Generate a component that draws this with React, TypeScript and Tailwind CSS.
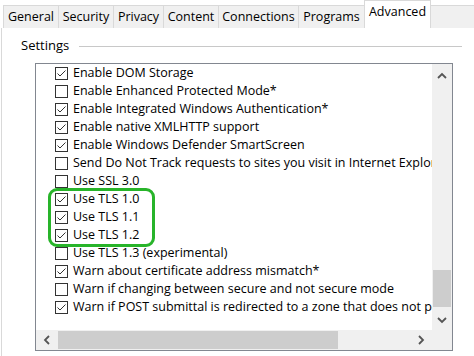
import React from 'react';

const tabs = [
  { label: 'General', w: 'w-[55px]' },
  { label: 'Security', w: 'w-[55px]' },
  { label: 'Privacy', w: 'w-[50px]' },
  { label: 'Content', w: 'w-[55px]' },
  { label: 'Connections', w: 'w-[80px]' },
  { label: 'Programs', w: 'w-[66px]' },
];

const rows: { label: string; checked: boolean }[] = [
  { label: 'Enable DOM Storage', checked: true },
  { label: 'Enable Enhanced Protected Mode*', checked: false },
  { label: 'Enable Integrated Windows Authentication*', checked: true },
  { label: 'Enable native XMLHTTP support', checked: true },
  { label: 'Enable Windows Defender SmartScreen', checked: true },
  { label: 'Send Do Not Track requests to sites you visit in Internet Explorer', checked: false },
  { label: 'Use SSL 3.0', checked: false },
  { label: 'Use TLS 1.0', checked: true },
  { label: 'Use TLS 1.1', checked: true },
  { label: 'Use TLS 1.2', checked: true },
  { label: 'Use TLS 1.3 (experimental)', checked: false },
  { label: 'Warn about certificate address mismatch*', checked: true },
  { label: 'Warn if changing between secure and not secure mode', checked: false },
  { label: 'Warn if POST submittal is redirected to a zone that does not permit posts', checked: true },
];

function CheckBox({ checked }: { checked: boolean }) {
  return (
    <svg width="13" height="13" viewBox="0 0 13 13" className="shrink-0">
      <rect x="0.5" y="0.5" width="12" height="12" fill="#fff" stroke="#333" />
      {checked && <polyline points="2.5,6.5 5,9 10.5,3.5" fill="none" stroke="#333" strokeWidth="1" />}
    </svg>
  );
}

function Chevron({ dir }: { dir: 'up' | 'down' | 'left' | 'right' }) {
  const pts = {
    up: '1,6 5,2 9,6',
    down: '1,2 5,6 9,2',
    left: '6,1 2,5 6,9',
    right: '2,1 6,5 2,9',
  }[dir];
  const horiz = dir === 'left' || dir === 'right';
  return (
    <svg width={horiz ? 8 : 10} height={horiz ? 10 : 8} viewBox={horiz ? '0 0 8 10' : '0 0 10 8'}>
      <polyline points={pts} fill="none" stroke="#555" strokeWidth="1.8" />
    </svg>
  );
}

export default function App() {
  return (
    <div className="relative w-[474px] h-[356px] overflow-hidden bg-white text-black font-['Open_Sans',sans-serif] text-[12.5px]">
      {/* Tab strip */}
      <div className="flex items-end h-[28px] pl-[3px]">
        {tabs.map((t) => (
          <div
            key={t.label}
            className={`${t.w} h-[23px] flex items-center justify-center bg-[#f0f0f0] border-t border-l border-[#d9d9d9] text-[12.5px] leading-none`}
          >
            {t.label}
          </div>
        ))}
        <div className="w-[67px] h-[28px] flex items-center justify-center bg-white border-t border-l border-r border-[#d9d9d9] text-[12.5px] leading-none pb-[4px]">
          Advanced
        </div>
        <div className="flex-1 h-[23px] bg-[#f0f0f0] border-t border-[#d9d9d9]" />
      </div>

      {/* Page */}
      <div className="h-[328px] border-l border-[#d9d9d9] ml-[1px] flex flex-col">
        <div className="flex items-center h-[35px] pl-[19px] pr-[12px] pt-[1px]">
          <span className="text-[13px]">Settings</span>
          <div className="flex-1 h-px bg-[#c8c8c8] ml-[10px]" />
        </div>

        <div className="ml-[33px] w-[418px] h-[288px] border border-[#828790] flex flex-col">
          <div className="flex h-[266px]">
            <div className="flex-1 overflow-hidden">
              {rows.map((r) => (
                <div key={r.label} className="h-[18px] flex items-center pl-[19px] gap-[5px] whitespace-nowrap">
                  <CheckBox checked={r.checked} />
                  <span className="leading-none">{r.label}</span>
                </div>
              ))}
            </div>
            {/* vertical scrollbar */}
            <div className="w-[20px] bg-[#f0f0f0] flex flex-col items-center">
              <div className="h-[22px] flex items-center justify-center pt-[2px]">
                <Chevron dir="up" />
              </div>
              <div className="flex-1 w-full flex flex-col justify-end px-[1px] pb-[3px]">
                <div className="h-[37px] bg-[#cdcdcd]" />
              </div>
              <div className="h-[20px] flex items-center justify-center">
                <Chevron dir="down" />
              </div>
            </div>
          </div>
          {/* horizontal scrollbar */}
          <div className="flex h-[20px]">
            <div className="flex-1 bg-[#f0f0f0] flex items-center">
              <div className="w-[22px] flex items-center justify-center">
                <Chevron dir="left" />
              </div>
              <div className="h-[18px] w-[280px] bg-[#cdcdcd]" />
              <div className="flex-1" />
              <div className="w-[22px] flex items-center justify-center">
                <Chevron dir="right" />
              </div>
            </div>
            <div className="w-[20px] bg-[#f0f0f0]" />
          </div>
        </div>
      </div>

      {/* annotation highlight */}
      <div className="absolute left-[48px] top-[188px] w-[107px] h-[59px] border-[3px] border-[#28b42a] rounded-[9px]" />
    </div>
  );
}
